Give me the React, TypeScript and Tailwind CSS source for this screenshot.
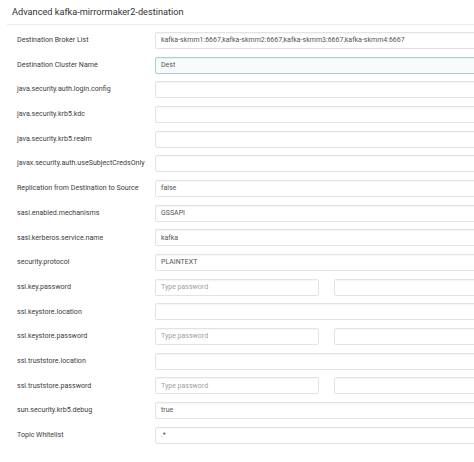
import React from 'react';

type Field = {
  label: string;
  value?: string;
  password?: boolean;
  focused?: boolean;
};

const fields: Field[] = [
  { label: 'Destination Broker List', value: 'kafka-skmm1:6667,kafka-skmm2:6667,kafka-skmm3:6667,kafka-skmm4:6667' },
  { label: 'Destination Cluster Name', value: 'Dest', focused: true },
  { label: 'java.security.auth.login.config' },
  { label: 'java.security.krb5.kdc' },
  { label: 'java.security.krb5.realm' },
  { label: 'javax.security.auth.useSubjectCredsOnly' },
  { label: 'Replication from Destination to Source', value: 'false' },
  { label: 'sasl.enabled.mechanisms', value: 'GSSAPI' },
  { label: 'sasl.kerberos.service.name', value: 'kafka' },
  { label: 'security.protocol', value: 'PLAINTEXT' },
  { label: 'ssl.key.password', password: true },
  { label: 'ssl.keystore.location' },
  { label: 'ssl.keystore.password', password: true },
  { label: 'ssl.truststore.location' },
  { label: 'ssl.truststore.password', password: true },
  { label: 'sun.security.krb5.debug', value: 'true' },
  { label: 'Topic Whitelist', value: '.*' },
];

const boxBase =
  'h-[17px] rounded-[2px] border px-[5px] flex items-center text-[7px] shadow-[inset_0_1px_1px_rgba(0,0,0,0.04)]';

const TextBox = ({ value, focused }: { value?: string; focused?: boolean }) => (
  <div
    className={`${boxBase} w-[330px] shrink-0 ${
      focused ? 'border-[#a6d0d0] bg-[#f8fbfb]' : 'border-[#e3e3e3] bg-white'
    } text-[#555]`}
  >
    {value}
  </div>
);

const PasswordBox = () => (
  <div className="flex items-center gap-[15px]">
    <div className={`${boxBase} w-[164px] shrink-0 border-[#e3e3e3] bg-white text-[#a0a0a0]`}>
      Type password
    </div>
    <div className={`${boxBase} w-[164px] shrink-0 border-[#e3e3e3] bg-white`} />
  </div>
);

export default function App() {
  return (
    <div
      className="w-[474px] h-[462px] overflow-hidden bg-white"
      style={{ fontFamily: 'Roboto, "Liberation Sans", sans-serif' }}
    >
      <div className="ml-[7px] h-[25px] border-b border-[#ebebeb] pl-[5px] flex items-center text-[9.2px] text-[#333]">
        Advanced kafka-mirrormaker2-destination
      </div>
      <div className="pt-[3px]">
        {fields.map((f) => (
          <div key={f.label} className="h-[24.7px] flex items-center">
            <div className="w-[155px] shrink-0 pl-[17px] text-[7.1px] text-[#3d3d3d] whitespace-nowrap">
              {f.label}
            </div>
            {f.password ? <PasswordBox /> : <TextBox value={f.value} focused={f.focused} />}
          </div>
        ))}
      </div>
    </div>
  );
}
